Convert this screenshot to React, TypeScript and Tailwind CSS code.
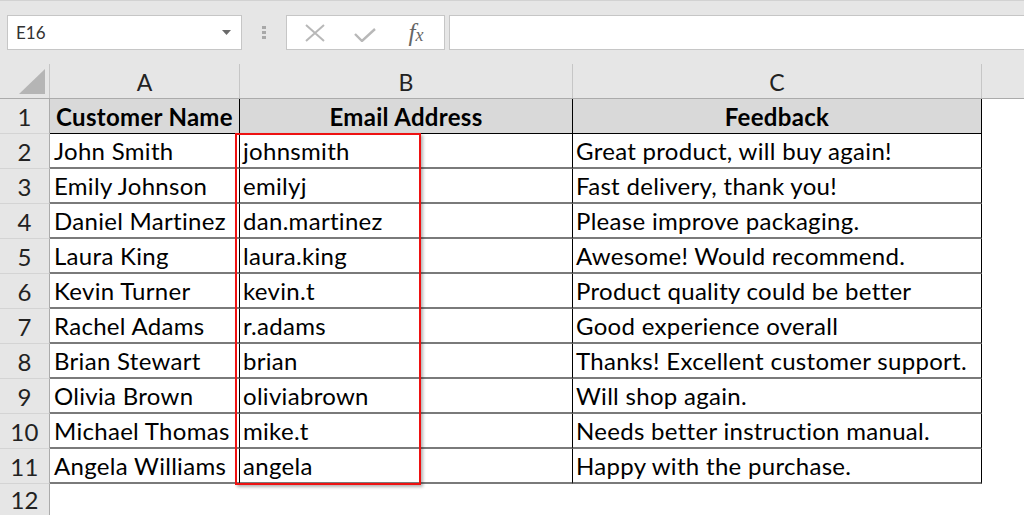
import React from "react";

const rows: [string, string, string][] = [
  ["John Smith", "johnsmith", "Great product, will buy again!"],
  ["Emily Johnson", "emilyj", "Fast delivery, thank you!"],
  ["Daniel Martinez", "dan.martinez", "Please improve packaging."],
  ["Laura King", "laura.king", "Awesome! Would recommend."],
  ["Kevin Turner", "kevin.t", "Product quality could be better"],
  ["Rachel Adams", "r.adams", "Good experience overall"],
  ["Brian Stewart", "brian", "Thanks! Excellent customer support."],
  ["Olivia Brown", "oliviabrown", "Will shop again."],
  ["Michael Thomas", "mike.t", "Needs better instruction manual."],
  ["Angela Williams", "angela", "Happy with the purchase."],
];

const font = { fontFamily: "Lato, 'Open Sans', sans-serif" };

function RowHead({ n }: { n: number }) {
  return (
    <div className="w-[50px] h-[35px] shrink-0 bg-[#e6e6e6] border-r border-b border-r-[#ababab] border-b-[#d4d4d4] flex items-center justify-center text-[24px] text-[#222] pt-[1px]">
      {n}
    </div>
  );
}

export default function App() {
  return (
    <div className="w-[1024px] h-[515px] overflow-hidden bg-white relative" style={font}>
      {/* Toolbar */}
      <div className="h-[64px] bg-[#e6e6e6] border-t border-[#d2d2d2] flex items-start pt-[14px] pl-[7px]">
        <div className="w-[235px] h-[35px] bg-white border border-[#c6c6c6] flex items-center justify-between pl-[8px] pr-[10px]">
          <span className="text-[17px] text-[#333]">E16</span>
          <svg width="9" height="5" viewBox="0 0 9 5">
            <polygon points="0,0 9,0 4.5,5" fill="#6a6a6a" />
          </svg>
        </div>
        <div className="w-[44px] h-[35px] flex flex-col items-center justify-center gap-[2px]">
          <div className="w-[4px] h-[3px] bg-[#a8a8a8]" />
          <div className="w-[4px] h-[3px] bg-[#a8a8a8]" />
          <div className="w-[4px] h-[3px] bg-[#a8a8a8]" />
        </div>
        <div className="w-[159px] h-[35px] bg-white border border-[#c6c6c6] flex items-center">
          <div className="w-[52px] flex justify-center pl-[4px]">
            <svg width="20" height="18" viewBox="0 0 20 18">
              <path d="M1 1 L19 17 M19 1 L1 17" stroke="#b8b8b8" strokeWidth="2" fill="none" />
            </svg>
          </div>
          <div className="w-[52px] flex justify-center pt-[4px]">
            <svg width="22" height="14" viewBox="0 0 22 14">
              <path d="M1 6 L8 13 L21 1" stroke="#b8b8b8" strokeWidth="2.4" fill="none" />
            </svg>
          </div>
          <div className="w-[50px] flex justify-center">
            <span className="text-[25px] italic text-[#666] leading-none" style={{ fontFamily: "'Liberation Serif', serif" }}>
              f<span className="text-[18px]">x</span>
            </span>
          </div>
        </div>
        <div className="ml-[4px] flex-1 h-[35px] bg-white border border-r-0 border-[#c6c6c6]" />
      </div>

      {/* Column headers */}
      <div className="flex h-[35px] bg-[#e6e6e6] border-b border-[#ababab] text-[23px] text-[#222]">
        <div className="w-[50px] shrink-0 border-r border-[#c6c6c6] flex items-end justify-end pr-[4px] pb-[4px]">
          <svg width="26" height="25" viewBox="0 0 26 25">
            <polygon points="26,0 26,25 0,25" fill="#b5b5b5" />
          </svg>
        </div>
        <div className="w-[190px] shrink-0 border-r border-[#c6c6c6] flex items-center justify-center pt-[2px]">A</div>
        <div className="w-[333px] shrink-0 border-r border-[#c6c6c6] flex items-center justify-center pt-[2px]">B</div>
        <div className="w-[409px] shrink-0 border-r border-[#c6c6c6] flex items-center justify-center pt-[2px]">C</div>
        <div className="flex-1" />
      </div>

      {/* Row 1 */}
      <div className="flex text-[24px] tracking-[0.3px]">
        <RowHead n={1} />
        <div className="w-[190px] h-[35px] shrink-0 bg-[#d9d9d9] border-r border-b border-black flex items-center justify-center font-bold text-black pt-[1px] whitespace-nowrap">
          Customer Name
        </div>
        <div className="w-[333px] h-[35px] shrink-0 bg-[#d9d9d9] border-r border-b border-black flex items-center justify-center font-bold text-black pt-[1px]">
          Email Address
        </div>
        <div className="w-[409px] h-[35px] shrink-0 bg-[#d9d9d9] border-r border-b border-black flex items-center justify-center font-bold text-black pt-[1px]">
          Feedback
        </div>
      </div>

      {rows.map((r, i) => (
        <div className="flex text-[24px] tracking-[0.3px]" key={i}>
          <RowHead n={i + 2} />
          <div className="w-[190px] h-[35px] shrink-0 border-r border-r-black border-b-2 border-b-[#7a7a7a] flex items-center pl-[4px] text-black pt-[1px] whitespace-nowrap overflow-hidden">
            {r[0]}
          </div>
          <div className="w-[333px] h-[35px] shrink-0 border-r border-r-black border-b-2 border-b-[#7a7a7a] flex items-center pl-[3px] text-black pt-[1px] whitespace-nowrap">
            {r[1]}
          </div>
          <div className="w-[409px] h-[35px] shrink-0 border-r border-r-black border-b-2 border-b-[#7a7a7a] flex items-center pl-[3px] text-black pt-[1px] whitespace-nowrap">
            {r[2]}
          </div>
        </div>
      ))}

      <div className="flex">
        <div className="w-[50px] h-[31px] shrink-0 bg-[#e6e6e6] border-r border-[#ababab] flex items-start justify-center text-[24px] text-[#222] pt-[2px] leading-[28px]">
          12
        </div>
      </div>

      {/* Red highlight */}
      <div className="absolute left-[235px] top-[133px] w-[186px] h-[352px] border-2 border-[#ee1111] shadow-[2px_2px_3px_rgba(0,0,0,0.3)]" />
    </div>
  );
}
